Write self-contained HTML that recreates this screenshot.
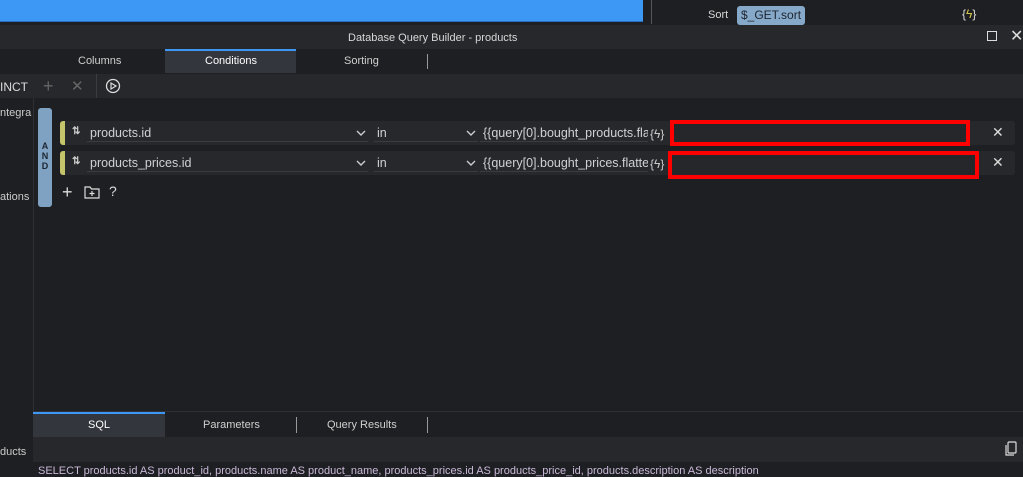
<!DOCTYPE html>
<html><head><style>
*{margin:0;padding:0;box-sizing:border-box}
body{width:1023px;height:471px;overflow:hidden;background:#1e1f22;font-family:"Liberation Sans",sans-serif;color:#d5d7db;position:relative;font-size:11px}
.a{position:absolute}
.row{position:absolute;left:60px;width:955px;height:24px;background:#27282c;border-radius:3px}
.stripe{position:absolute;left:0;top:0;width:5px;height:24px;background:#c4c46a;border-radius:3px 0 0 3px}
.sel{position:absolute;top:3px;height:18px;border-bottom:1px solid #3a3c42;font-size:12.5px;color:#cfd1d5;padding-left:3px;line-height:18px}
.chev{position:absolute;top:9px}
.red{position:absolute;border:4px solid #ff0000;background:#26272b}
</style></head><body>
<div class="a" style="left:0;top:0;width:643px;height:22px;background:#3d97f5;border-bottom:1px solid #2a6fbd"></div>
<div class="a" style="left:651px;top:0;width:1px;height:24px;background:#555"></div>
<div class="a" style="left:708px;top:9px;font-size:11px;color:#d8d8d8">Sort</div>
<div class="a" style="left:737px;top:6px;width:68px;height:19px;background:#86a9c9;border-radius:3px;color:#1e2530;font-size:12px;line-height:19px;padding-left:4px;white-space:nowrap;overflow:hidden">$_GET.sort</div>
<div class="a" style="left:962px;top:7px;font-size:12px;color:#ddd">{<span style="color:#d8c84a">ϟ</span>}</div>
<div class="a" style="left:0;top:25px;width:1023px;height:24px;background:#27282c"></div>
<div class="a" style="left:348px;top:32px;font-size:11px;color:#d8d8d8">Database Query Builder - products</div>
<div class="a" style="left:987px;top:31px;width:10px;height:10px;border:1px solid #ddd"></div>
<div class="a" style="left:1010px;top:26px;font-size:16px;color:#ddd">✕</div>
<div class="a" style="left:165px;top:49px;width:131px;height:24px;background:#33363d;border-top:2px solid #3d97f5"></div>
<div class="a" style="left:78px;top:55px;font-size:11px;color:#d0d0d0">Columns</div>
<div class="a" style="left:205px;top:55px;font-size:11px;color:#fff">Conditions</div>
<div class="a" style="left:344px;top:55px;font-size:11px;color:#d0d0d0">Sorting</div>
<div class="a" style="left:427px;top:54px;width:1px;height:15px;background:#999"></div>
<div class="a" style="left:0;top:74px;width:1023px;height:24px;background:#27282c"></div>
<div class="a" style="left:0;top:80px;font-size:12px;color:#ddd">INCT</div>
<div class="a" style="left:43px;top:76px;font-size:18px;color:#666">+</div>
<div class="a" style="left:71px;top:77px;font-size:15px;color:#666">✕</div>
<div class="a" style="left:96px;top:74px;width:1px;height:24px;background:#3a3c42"></div>
<svg class="a" style="left:105px;top:78px" width="16" height="16"><circle cx="8" cy="8" r="6.5" fill="none" stroke="#ddd" stroke-width="1.3"/><path d="M6 5v6l5-3z" fill="none" stroke="#ddd" stroke-width="1.2"/></svg>
<div class="a" style="left:33px;top:98px;width:1px;height:314px;background:#2e3035"></div>
<div class="a" style="left:0;top:107px;font-size:11px;color:#ccc">ntegra</div>
<div class="a" style="left:0;top:191px;font-size:11px;color:#ccc">ations</div>
<div class="a" style="left:0;top:446px;font-size:11px;color:#ccc">ducts</div>
<div class="a" style="left:38px;top:108px;width:14px;height:99px;background:#7fa2c2;border-radius:3px"></div>
<div class="a" style="left:41px;top:141px;font-size:9px;font-weight:bold;color:#1e2530;line-height:10px;text-align:center;width:8px">A<br>N<br>D</div>
<div class="row" style="top:121px"><div class="stripe"></div>
<div class="a" style="left:12px;top:5px;font-size:10px;font-weight:bold;color:#ccc">⇅</div>
<div class="sel" style="left:27px;width:281px">products.id</div><svg class="chev" style="left:296px" width="10" height="6"><path d="M1 1l4 4 4-4" fill="none" stroke="#ccc" stroke-width="1.4"/></svg>
<div class="sel" style="left:314px;width:104px">in</div><svg class="chev" style="left:406px" width="10" height="6"><path d="M1 1l4 4 4-4" fill="none" stroke="#ccc" stroke-width="1.4"/></svg>
<div class="sel" style="left:420px;width:168px;overflow:hidden;white-space:nowrap">{{query[0].bought_products.fla</div>
<div class="a" style="left:590px;top:6px;font-size:12px;color:#ccc">{ϟ}</div>
<div class="red" style="left:610px;top:-1px;width:300px;height:26px"></div>
<div class="a" style="left:932px;top:3px;font-size:14px;color:#ddd">✕</div></div>
<div class="row" style="top:151px"><div class="stripe"></div>
<div class="a" style="left:12px;top:5px;font-size:10px;font-weight:bold;color:#ccc">⇅</div>
<div class="sel" style="left:27px;width:281px">products_prices.id</div><svg class="chev" style="left:296px" width="10" height="6"><path d="M1 1l4 4 4-4" fill="none" stroke="#ccc" stroke-width="1.4"/></svg>
<div class="sel" style="left:314px;width:104px">in</div><svg class="chev" style="left:406px" width="10" height="6"><path d="M1 1l4 4 4-4" fill="none" stroke="#ccc" stroke-width="1.4"/></svg>
<div class="sel" style="left:420px;width:168px;overflow:hidden;white-space:nowrap">{{query[0].bought_prices.flatte</div>
<div class="a" style="left:590px;top:6px;font-size:12px;color:#ccc">{ϟ}</div>
<div class="red" style="left:608px;top:0;width:311px;height:28px"></div>
<div class="a" style="left:932px;top:3px;font-size:14px;color:#ddd">✕</div></div>
<div class="a" style="left:62px;top:182px;font-size:18px;color:#ddd">+</div>
<svg class="a" style="left:84px;top:185px" width="16" height="14"><path d="M1 2h5l1.5 2H15v9H1z" fill="none" stroke="#ddd" stroke-width="1.2"/><path d="M8 6v5M5.5 8.5h5" stroke="#ddd" stroke-width="1.2"/></svg>
<div class="a" style="left:109px;top:183px;font-size:14px;color:#ddd">?</div>
<div class="a" style="left:33px;top:411px;width:990px;height:1px;background:#2e3035"></div>
<div class="a" style="left:33px;top:412px;width:132px;height:25px;background:#33363d;border-top:2px solid #3d97f5"></div>
<div class="a" style="left:88px;top:419px;font-size:11px;color:#fff">SQL</div>
<div class="a" style="left:203px;top:419px;font-size:11px;color:#d0d0d0">Parameters</div>
<div class="a" style="left:296px;top:417px;width:1px;height:16px;background:#999"></div>
<div class="a" style="left:327px;top:419px;font-size:11px;color:#d0d0d0">Query Results</div>
<div class="a" style="left:427px;top:417px;width:1px;height:16px;background:#999"></div>
<div class="a" style="left:33px;top:437px;width:990px;height:25px;background:#27282c"></div>
<svg class="a" style="left:1004px;top:441px" width="14" height="16"><rect x="4" y="1" width="8" height="11" rx="1" fill="none" stroke="#ddd" stroke-width="1.2"/><path d="M2 4v10h8" fill="none" stroke="#ddd" stroke-width="1.2"/></svg>
<div class="a" style="left:38px;top:465px;font-size:11px;color:#c9b8d8;white-space:nowrap">SELECT products.id AS product_id, products.name AS product_name, products_prices.id AS products_price_id, products.description AS description</div>
</body></html>
